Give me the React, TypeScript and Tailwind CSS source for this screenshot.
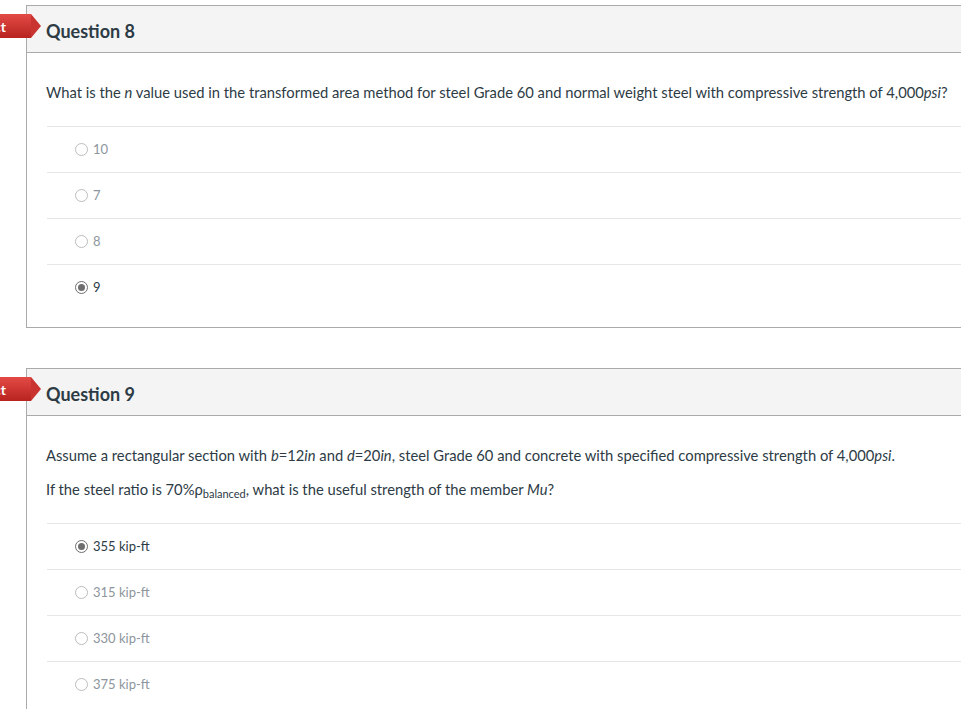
import React from "react";

type Option = { label: string; selected?: boolean };

function Flag() {
  return (
    <div className="absolute left-0 top-[9px] flex h-[24px]">
      <div className="flex h-full w-[31px] items-center justify-end overflow-hidden bg-gradient-to-b from-[#e34a45] to-[#b8221f] pr-[25px] text-[14px] font-bold text-white">
        <span className="whitespace-nowrap">Incorrect</span>
      </div>
      <div className="h-0 w-0 border-y-[12px] border-l-[10px] border-y-transparent border-l-[#c93330]" />
    </div>
  );
}

function Radio({ selected }: { selected?: boolean }) {
  if (selected) {
    return (
      <span className="flex h-[13px] w-[13px] items-center justify-center rounded-full border border-[#6e6e6e] bg-white">
        <span className="h-[7px] w-[7px] rounded-full bg-[#6e6e6e]" />
      </span>
    );
  }
  return <span className="h-[13px] w-[13px] rounded-full border border-[#bdbdbd] bg-white" />;
}

function Answers({ options }: { options: Option[] }) {
  return (
    <div className="ml-[20px]">
      {options.map((o) => (
        <div
          key={o.label}
          className="flex h-[46px] items-center gap-[5px] border-t border-[#e6e6e6] pl-[28px]"
        >
          <Radio selected={o.selected} />
          <span
            className={
              o.selected ? "text-[13px] text-[#2d3b45]" : "text-[13px] text-[#8d959d]"
            }
          >
            {o.label}
          </span>
        </div>
      ))}
    </div>
  );
}

function QuestionBox({
  title,
  children,
  options,
}: {
  title: string;
  children: React.ReactNode;
  options: Option[];
}) {
  return (
    <div className="relative pl-[26px]">
      <div className="w-[1000px] border border-[#aaaaaa] bg-white pb-[17px]">
        <div className="flex h-[47px] items-center border-b border-[#aaaaaa] bg-[#f4f4f4] pl-[19px] pt-[4px] text-[18px] font-bold text-[#2d3b45]">
          {title}
        </div>
        <div className="flex flex-col gap-[14px] pb-[24px] pl-[19px] pt-[29px] text-[14.75px] leading-[20px] text-[#2d3b45]">
          {children}
        </div>
        <Answers options={options} />
      </div>
      <Flag />
    </div>
  );
}

export default function App() {
  return (
    <div
      className="min-h-screen overflow-hidden bg-white pt-[5px]"
      style={{ fontFamily: "Lato, 'Open Sans', sans-serif" }}
    >
      <div className="flex flex-col gap-[40px]">
        <QuestionBox
          title="Question 8"
          options={[
            { label: "10" },
            { label: "7" },
            { label: "8" },
            { label: "9", selected: true },
          ]}
        >
          <p>
            What is the <i>n</i> value used in the transformed area method for steel
            Grade 60 and normal weight steel with compressive strength of 4,000
            <i>psi</i>?
          </p>
        </QuestionBox>
        <QuestionBox
          title="Question 9"
          options={[
            { label: "355 kip-ft", selected: true },
            { label: "315 kip-ft" },
            { label: "330 kip-ft" },
            { label: "375 kip-ft" },
          ]}
        >
          <p>
            Assume a rectangular section with <i>b</i>=12<i>in</i> and <i>d</i>=20
            <i>in</i>, steel Grade 60 and concrete with specified compressive strength
            of 4,000<i>psi</i>.
          </p>
          <p>
            If the steel ratio is 70%ρ<sub className="text-[11px]">balanced</sub>,
            what is the useful strength of the member <i>Mu</i>?
          </p>
        </QuestionBox>
      </div>
    </div>
  );
}
